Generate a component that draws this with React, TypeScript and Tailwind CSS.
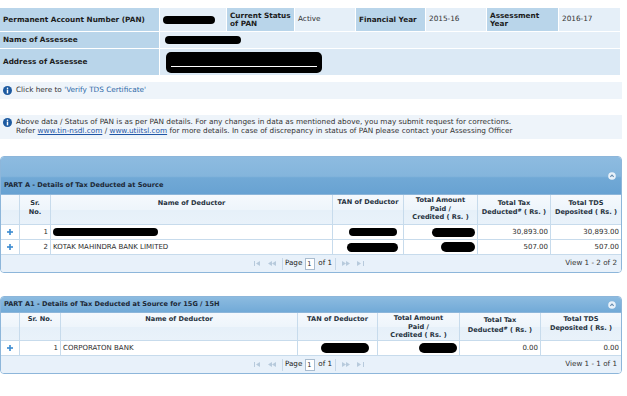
import React from "react";

const F = "font-['DejaVu_Sans',sans-serif]";

function Blob({ className }: { className: string }) {
  return <span className={`inline-block bg-black rounded-full ${className}`} />;
}

function InfoIcon() {
  return (
    <svg width="9" height="9" viewBox="0 0 10 10" className="shrink-0">
      <circle cx="5" cy="5" r="5" fill="#1d5aa0" />
      <circle cx="5" cy="2.6" r="0.9" fill="#fff" />
      <rect x="4.2" y="4" width="1.6" height="4.2" fill="#fff" />
    </svg>
  );
}

function Plus() {
  return (
    <svg width="6" height="6" viewBox="0 0 6 6">
      <rect x="2.2" y="0" width="1.6" height="6" fill="#3b8ad0" />
      <rect x="0" y="2.2" width="6" height="1.6" fill="#3b8ad0" />
    </svg>
  );
}

function Collapse() {
  return (
    <svg width="8" height="8" viewBox="0 0 8 8">
      <circle cx="4" cy="4" r="3.8" fill="#e9f2fa" />
      <path d="M2.3 4.8 L4 3 L5.7 4.8" stroke="#6a8fb0" strokeWidth="1.1" fill="none" />
    </svg>
  );
}

function PagerIcon({ kind }: { kind: "first" | "prev" | "next" | "last" }) {
  const c = "#b7cadc";
  if (kind === "first")
    return (
      <svg width="7" height="5" viewBox="0 0 7 5">
        <rect x="0" y="0" width="1" height="5" fill={c} />
        <path d="M6 0 L2 2.5 L6 5 Z" fill={c} />
      </svg>
    );
  if (kind === "prev")
    return (
      <svg width="8" height="5" viewBox="0 0 8 5">
        <path d="M4 0 L0 2.5 L4 5 Z" fill={c} />
        <path d="M8 0 L4 2.5 L8 5 Z" fill={c} />
      </svg>
    );
  if (kind === "next")
    return (
      <svg width="8" height="5" viewBox="0 0 8 5">
        <path d="M0 0 L4 2.5 L0 5 Z" fill={c} />
        <path d="M4 0 L8 2.5 L4 5 Z" fill={c} />
      </svg>
    );
  return (
    <svg width="7" height="5" viewBox="0 0 7 5">
      <path d="M0 0 L4 2.5 L0 5 Z" fill={c} />
      <rect x="6" y="0" width="1" height="5" fill={c} />
    </svg>
  );
}

function Pager({ view, h }: { view: string; h: string }) {
  return (
    <div className={`${h} bg-[#e8f1fa] flex items-center`}>
      <div className="flex-1" />
      <div className="flex items-center text-[7.2px] text-[#222]">
        <div className="flex items-center gap-[7px] pr-[6px]">
          <PagerIcon kind="first" />
          <PagerIcon kind="prev" />
        </div>
        <span className="w-px h-[12px] bg-[#c6d7e8]" />
        <span className="pl-[2px]">Page</span>
        <span className="mx-[3px] w-[10px] h-[12px] bg-white border border-[#a9bccf] text-[6.5px] leading-[10px] pl-[1px]">1</span>
        <span className="pr-[3px]">of 1</span>
        <span className="w-px h-[12px] bg-[#c6d7e8]" />
        <div className="flex items-center gap-[7px] pl-[6px]">
          <PagerIcon kind="next" />
          <PagerIcon kind="last" />
        </div>
      </div>
      <div className="flex-1 flex justify-end pr-[4px] text-[7.2px] text-[#333]">{view}</div>
    </div>
  );
}

type Cell = React.ReactNode;

function Panel({
  title,
  cols,
  tall,
  heads,
  rows,
  view,
  headPads,
  headH,
}: {
  title: string;
  cols: string;
  tall: boolean;
  heads: Cell[];
  rows: Cell[][];
  view: string;
  headPads: string[];
  headH: string;
}) {
  return (
    <div className="w-[622px] border border-[#8db6da] rounded-[4px] overflow-hidden">
      {tall ? (
        <div className="h-[37px] flex bg-[linear-gradient(to_bottom,#8dbbe0_0%,#84b5dc_52%,#71a9d6_56%,#68a2d2_100%)]">
          <div className="flex-1 flex items-end pl-[3px] pb-[3px] text-[6.6px] font-bold text-[#1c2836]">{title}</div>
          <div className="flex items-center pr-[5px]">
            <Collapse />
          </div>
        </div>
      ) : (
        <div className="h-[15px] flex items-center bg-[linear-gradient(to_bottom,#8cbbe0,#72aad7)]">
          <div className="flex-1 pl-[3px] text-[6.6px] font-bold text-[#1c2836]">{title}</div>
          <div className="flex items-center pr-[5px]">
            <Collapse />
          </div>
        </div>
      )}
      <div className={`grid ${cols} ${headH} bg-[linear-gradient(to_bottom,#f5f9fd_0%,#eef5fb_50%,#e6f0f9_52%,#e9f2fa_100%)] border-t border-[#8db6da]`}>
        {heads.map((h, i) => (
          <div
            key={i}
            className={`flex flex-col items-center text-center font-bold text-[6.6px] text-[#26323e] ${headPads[i]} ${i < heads.length - 1 ? "border-r border-[#c7dbec]" : ""}`}
          >
            {h}
          </div>
        ))}
      </div>
      {rows.map((r, ri) => (
        <div key={ri} className={`grid ${cols} h-[15px] bg-white border-t border-[#c7dbec]`}>
          {r.map((c, ci) => (
            <div
              key={ci}
              className={`flex items-center text-[7px] text-[#2d2d2d] overflow-hidden whitespace-nowrap ${
                ci === 0 ? "justify-center" : ci === 2 ? "justify-start pl-[2px]" : ci === 3 ? "justify-center" : "justify-end pr-[2px]"
              } ${ci < r.length - 1 ? "border-r border-[#c7dbec]" : ""}`}
            >
              {c}
            </div>
          ))}
        </div>
      ))}
      <div className="border-t border-[#c7dbec]">
        <Pager view={view} h="h-[17px]" />
      </div>
    </div>
  );
}

const Rs = () => <span>( Rs. )</span>;

export default function App() {
  const L = "bg-[#b9d5ea] flex items-center px-[3px] text-[7.3px] font-bold text-[#1c1c1c] leading-[8px] whitespace-nowrap";
  const V = "bg-[#e5eff8] flex items-center px-[3px] text-[7.3px] text-[#333]";
  return (
    <div className={`w-[627px] h-[396px] bg-white overflow-hidden ${F}`}>
      <div className="pt-[8px]">
        <div className="grid grid-cols-[159px_66px_67px_60px_69px_60px_71px_61px] grid-rows-[23px_16px_26px] gap-px w-[620px] bg-white">
          <div className={L}>Permanent Account Number (PAN)</div>
          <div className={V}>
            <Blob className="w-[52px] h-[8px]" />
          </div>
          <div className={L}>
            Current Status
            <br />
            of PAN
          </div>
          <div className={V}>Active</div>
          <div className={L}>Financial Year</div>
          <div className={V}>2015-16</div>
          <div className={L}>
            Assessment
            <br />
            Year
          </div>
          <div className={V}>2016-17</div>

          <div className={L}>Name of Assessee</div>
          <div className={`${V} col-span-7`}>
            <Blob className="w-[76px] h-[8px] ml-[2px]" />
          </div>

          <div className={L}>Address of Assessee</div>
          <div className="bg-[#dbe9f5] col-span-7 flex items-center px-[3px]">
            <div className="w-[156px] h-[21px] bg-black rounded-[5px] ml-[3px] flex items-end pb-[6px] px-[5px]">
              <div className="w-full h-px bg-white" />
            </div>
          </div>
        </div>
      </div>

      <div className="mt-[7px] w-[622px] h-[17px] bg-[#eef4fa] flex items-center gap-[4px] px-[3px] text-[7.3px] text-[#333]">
        <InfoIcon />
        <span>
          Click here to <span className="text-[#2f6aa8]">'Verify TDS Certificate'</span>
        </span>
      </div>

      <div className="mt-[16px] w-[622px] h-[24px] bg-[#eef4fa] flex items-start gap-[4px] px-[3px] pt-[2px] text-[7.3px] text-[#333] leading-[9px]">
        <div className="pt-[1px]">
          <InfoIcon />
        </div>
        <div className="whitespace-nowrap">
          <div>Above data / Status of PAN is as per PAN details. For any changes in data as mentioned above, you may submit request for corrections.</div>
          <div>
            Refer <span className="text-[#1f56a6] underline">www.tin-nsdl.com</span> /{" "}
            <span className="text-[#1f56a6] underline">www.utiitsl.com</span> for more details. In case of discrepancy in status of PAN please contact your Assessing Officer
          </div>
        </div>
      </div>

      <div className="mt-[17px]">
        <Panel
          title="PART A - Details of Tax Deducted at Source"
          cols="grid-cols-[19px_31px_282px_71px_74px_73px_70px]"
          tall={true}
          headH="h-[30px]"
          headPads={["", "pt-[4px] leading-[9px]", "pt-[4px]", "pt-[3px]", "pt-[1px] leading-[8.5px]", "pt-[4px] leading-[9px]", "pt-[4px] leading-[9px]"]}
          heads={[
            "",
            <>
              <span>Sr.</span>
              <span>No.</span>
            </>,
            "Name of Deductor",
            "TAN of Deductor",
            <>
              <span>Total Amount</span>
              <span>Paid /</span>
              <span>
                Credited <Rs />
              </span>
            </>,
            <>
              <span>Total Tax</span>
              <span>
                Deducted<sup className="text-[5px]">#</sup> <Rs />
              </span>
            </>,
            <>
              <span>Total TDS</span>
              <span>
                Deposited <Rs />
              </span>
            </>,
          ]}
          rows={[
            [<Plus />, "1", <Blob className="w-[105px] h-[8px]" />, <Blob className="w-[48px] h-[8px] ml-[10px]" />, <Blob className="w-[43px] h-[9px]" />, "30,893.00", "30,893.00"],
            [<Plus />, "2", "KOTAK MAHINDRA BANK LIMITED", <Blob className="w-[51px] h-[9px] ml-[8px]" />, <Blob className="w-[34px] h-[10px]" />, "507.00", "507.00"],
          ]}
          view="View 1 - 2 of 2"
        />
      </div>

      <div className="mt-[23px]">
        <Panel
          title="PART A1 - Details of Tax Deducted at Source for 15G / 15H"
          cols="grid-cols-[19px_41px_237px_80px_82px_81px_80px]"
          tall={false}
          headH="h-[28px]"
          headPads={["", "pt-[2px]", "pt-[2px]", "pt-[2px]", "pt-[1px] leading-[8.5px]", "pt-[2px] leading-[10px]", "pt-[2px] leading-[9px]"]}
          heads={[
            "",
            "Sr. No.",
            "Name of Deductor",
            "TAN of Deductor",
            <>
              <span>Total Amount</span>
              <span>Paid /</span>
              <span>
                Credited <Rs />
              </span>
            </>,
            <>
              <span>Total Tax</span>
              <span>
                Deducted<sup className="text-[5px]">#</sup> <Rs />
              </span>
            </>,
            <>
              <span>Total TDS</span>
              <span>
                Deposited <Rs />
              </span>
            </>,
          ]}
          rows={[[<Plus />, "1", "CORPORATON BANK", <Blob className="w-[48px] h-[10px] ml-[14px]" />, <Blob className="w-[38px] h-[10px] ml-[40px]" />, "0.00", "0.00"]]}
          view="View 1 - 1 of 1"
        />
      </div>
    </div>
  );
}
